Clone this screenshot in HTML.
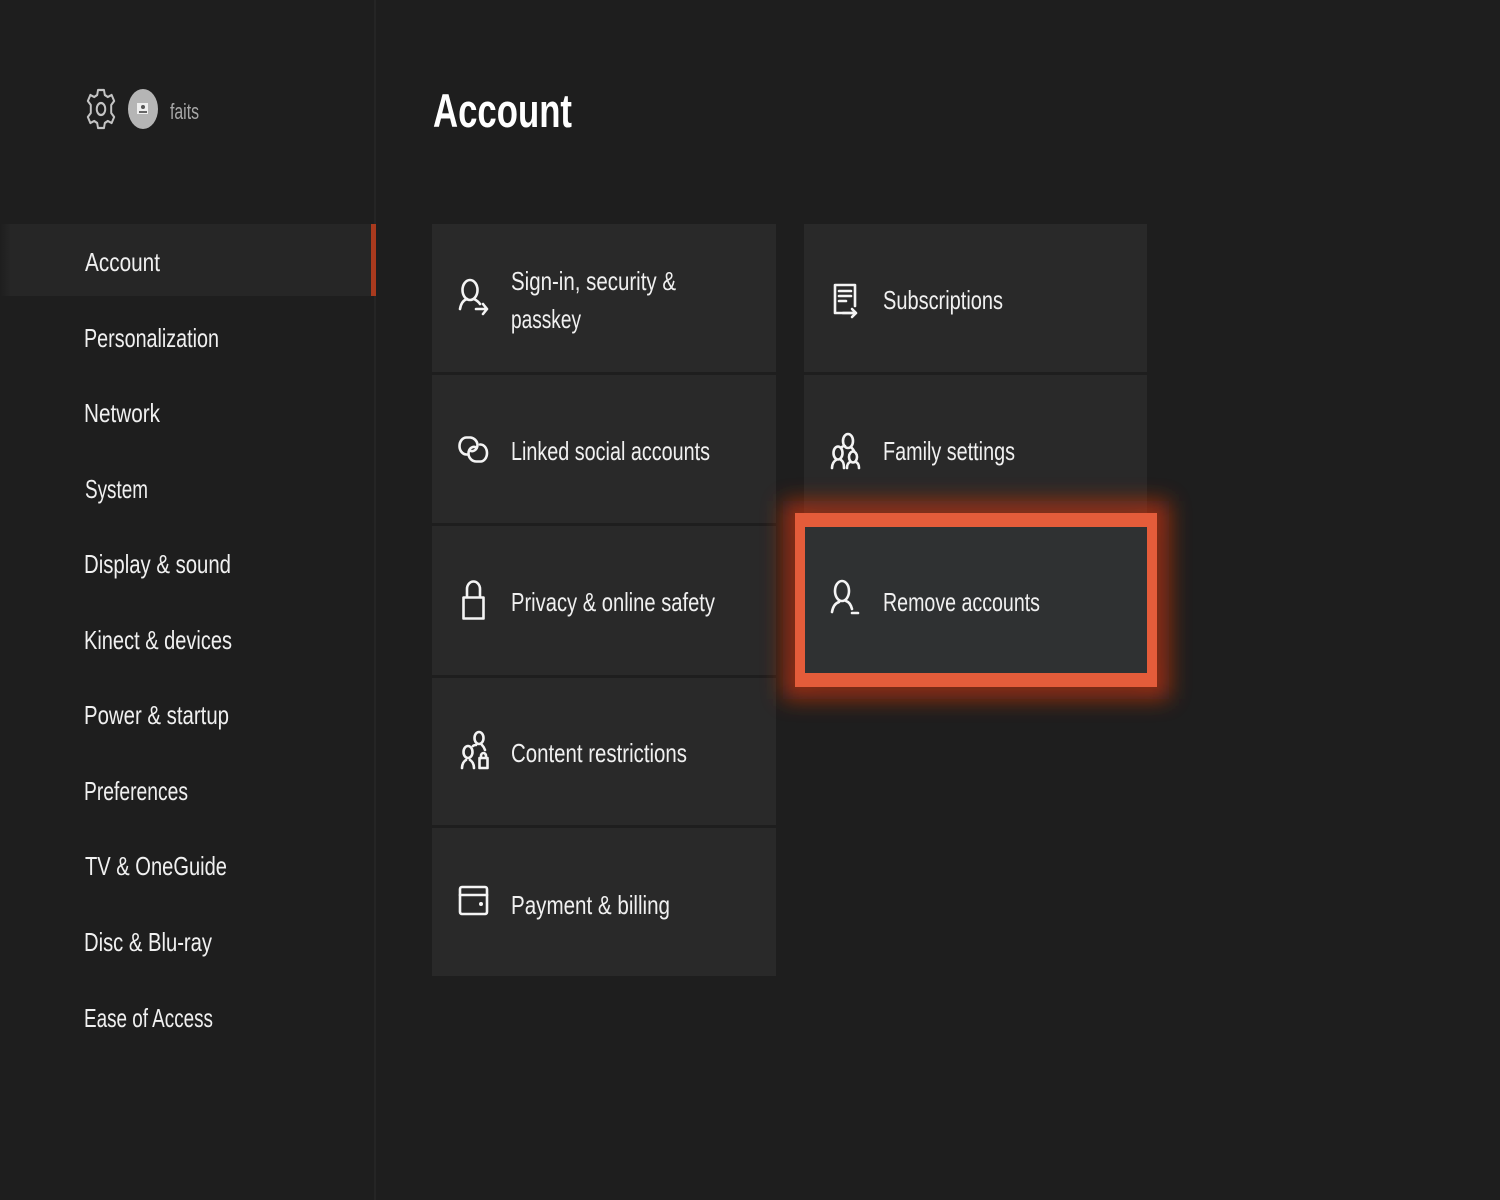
<!DOCTYPE html>
<html><head><meta charset="utf-8"><title>Account</title>
<style>
html,body{margin:0;padding:0;background:#1e1e1e;width:1500px;height:1200px;overflow:hidden}
svg{display:block}
text{font-family:"Liberation Sans",sans-serif;fill:#f0f0f0}
.n{font-size:26px}
.c{font-size:26px}
.i{fill:none;stroke:#f4f4f4;stroke-width:2.6;stroke-linecap:round;stroke-linejoin:round}
</style></head><body>
<svg width="1500" height="1200" viewBox="0 0 1500 1200" xmlns="http://www.w3.org/2000/svg">
<defs>
<filter id="glow" x="-25%" y="-50%" width="150%" height="200%"><feGaussianBlur stdDeviation="11"/></filter>
<linearGradient id="sel" x1="0" x2="1" y1="0" y2="0"><stop offset="0" stop-color="#1e1e1e"/><stop offset=".03" stop-color="#262626"/><stop offset="1" stop-color="#262626"/></linearGradient>
</defs>
<rect width="1500" height="1200" fill="#1e1e1e"/>
<rect x="374" y="0" width="2" height="1200" fill="#252525"/>
<rect x="0" y="224" width="371" height="72" fill="url(#sel)"/>
<rect x="371" y="224" width="5" height="72" fill="#a93a1e"/>

<g transform="translate(101 0) scale(.85 1) translate(-101 0)" style="fill:none;stroke:#c4c4c4;stroke-width:2.3;stroke-linejoin:round">
<ellipse cx="101" cy="109" rx="5" ry="6"/>
<path d="M97.500 90h7l1 5 3.500 2 4.500-2 3 6-3.500 4v8l3.500 4-3 6-4.500-2-3.500 2-1 5h-7l-1-5-3.500-2-4.500 2-3-6 3.500-4v-8l-3.500-4 3-6 4.500 2 3.500-2z"/>
</g>
<ellipse cx="143" cy="109" rx="15" ry="20" fill="#b5b5b5"/>
<rect x="137" y="103" width="11" height="11" fill="#efefef"/>
<circle cx="143" cy="107" r="2" fill="#555"/>
<rect x="139" y="111" width="8" height="2" fill="#666"/>
<text x="170" y="119" font-size="22" textLength="29" lengthAdjust="spacingAndGlyphs" style="fill:#a8a8a8">faits</text>

<text x="433" y="127" font-size="47" font-weight="700" textLength="139" lengthAdjust="spacingAndGlyphs" style="fill:#fff">Account</text>

<g class="n">
<text x="85" y="271" textLength="75" lengthAdjust="spacingAndGlyphs">Account</text>
<text x="84" y="347" textLength="135" lengthAdjust="spacingAndGlyphs">Personalization</text>
<text x="84" y="422" textLength="76" lengthAdjust="spacingAndGlyphs">Network</text>
<text x="85" y="498" textLength="63" lengthAdjust="spacingAndGlyphs">System</text>
<text x="84" y="573" textLength="147" lengthAdjust="spacingAndGlyphs">Display &amp; sound</text>
<text x="84" y="649" textLength="148" lengthAdjust="spacingAndGlyphs">Kinect &amp; devices</text>
<text x="84" y="724" textLength="145" lengthAdjust="spacingAndGlyphs">Power &amp; startup</text>
<text x="84" y="800" textLength="104" lengthAdjust="spacingAndGlyphs">Preferences</text>
<text x="85" y="875" textLength="142" lengthAdjust="spacingAndGlyphs">TV &amp; OneGuide</text>
<text x="84" y="951" textLength="128" lengthAdjust="spacingAndGlyphs">Disc &amp; Blu-ray</text>
<text x="84" y="1027" textLength="129" lengthAdjust="spacingAndGlyphs">Ease of Access</text>
</g>

<g fill="#292929">
<rect x="432" y="224" width="344" height="148"/>
<rect x="432" y="375" width="344" height="148"/>
<rect x="432" y="526" width="344" height="149"/>
<rect x="432" y="678" width="344" height="147"/>
<rect x="432" y="828" width="344" height="148"/>
<rect x="804" y="224" width="343" height="148"/>
<rect x="804" y="375" width="343" height="148"/>
</g>

<rect x="795" y="513" width="362" height="174" fill="none" stroke="#c8360f" stroke-width="24" filter="url(#glow)" opacity=".72"/>
<rect x="795" y="513" width="362" height="174" fill="#e45c3a"/>
<rect x="805" y="527" width="342" height="146" fill="#2f3132"/>

<g class="c">
<text x="511" y="290" textLength="165" lengthAdjust="spacingAndGlyphs">Sign-in, security &amp;</text>
<text x="511" y="328" textLength="70" lengthAdjust="spacingAndGlyphs">passkey</text>
<text x="511" y="460" textLength="199" lengthAdjust="spacingAndGlyphs">Linked social accounts</text>
<text x="511" y="611" textLength="204" lengthAdjust="spacingAndGlyphs">Privacy &amp; online safety</text>
<text x="511" y="762" textLength="176" lengthAdjust="spacingAndGlyphs">Content restrictions</text>
<text x="511" y="914" textLength="159" lengthAdjust="spacingAndGlyphs">Payment &amp; billing</text>
<text x="883" y="309" textLength="120" lengthAdjust="spacingAndGlyphs">Subscriptions</text>
<text x="883" y="460" textLength="132" lengthAdjust="spacingAndGlyphs">Family settings</text>
<text x="883" y="611" textLength="157" lengthAdjust="spacingAndGlyphs">Remove accounts</text>
</g>

<g class="i">
<!-- sign-in -->
<ellipse cx="470" cy="290" rx="7.500" ry="10"/>
<path d="M460 309c1-6 4-9 7-10M474 299c2 1 4 2 6 5"/>
<path d="M476 309h11M483 304l4 5-4 5"/>
<!-- linked -->
<path d="M467 454.500h-0.500a7 8.500 0 0 1 0-17h4a8 8 0 0 1 7 7c0 5-4 8-8 6"/>
<path d="M480 444.500h0.500a6.500 8.500 0 0 1 0 17h-4a8 8 0 0 1-8-8c0-5 4-8 8-6"/>
<!-- lock -->
<rect x="463.500" y="597.500" width="20" height="21"/>
<path d="M467 597v-8a6.500 7.500 0 0 1 13 0v8"/>
<!-- content restrictions -->
<ellipse cx="479" cy="738" rx="4.500" ry="6"/>
<ellipse cx="468" cy="752" rx="4.500" ry="6"/>
<path d="M462 768c0-4 2-7 4-8M470 760c2 1 4 4 4 8M473 746c1-1 2-1 3-1M482 745c1 1 2 2 3 5"/>
<rect x="479.500" y="758" width="8" height="10"/>
<path d="M481 758v-2a2.500 3 0 0 1 5 0v2"/>
<!-- payment -->
<rect x="460" y="887" width="27" height="27" rx="2"/>
<path d="M460 895h27"/>
<!-- subscriptions -->
<path d="M855 306v-21h-20v28h18"/>
<path d="M839 291h12M839 296h12M839 301h7"/>
<path d="M843 313h13M852 309l4 4-4 4"/>
<!-- family -->
<ellipse cx="848" cy="441" rx="5" ry="7"/>
<ellipse cx="838" cy="453" rx="4.500" ry="6.500"/>
<ellipse cx="853" cy="457" rx="4" ry="5.500"/>
<path d="M832 468c0-4 2-7 4-8M841 460c2 1 3 4 3 8M847 468c0-3 1-5 3-6M856 462c2 1 3 3 3 6M842 447c1-1 2-1 3-1M851 447c1 1 2 2 3 4"/>
<!-- remove -->
<ellipse cx="842" cy="591" rx="7" ry="10"/>
<path d="M832 612c1-6 4-9 7-10M846 601c3 1 5 4 6 8"/>
<path d="M852 613h6"/>
</g>
<circle cx="481" cy="904" r="2" fill="#f4f4f4"/>
</svg>
</body></html>
